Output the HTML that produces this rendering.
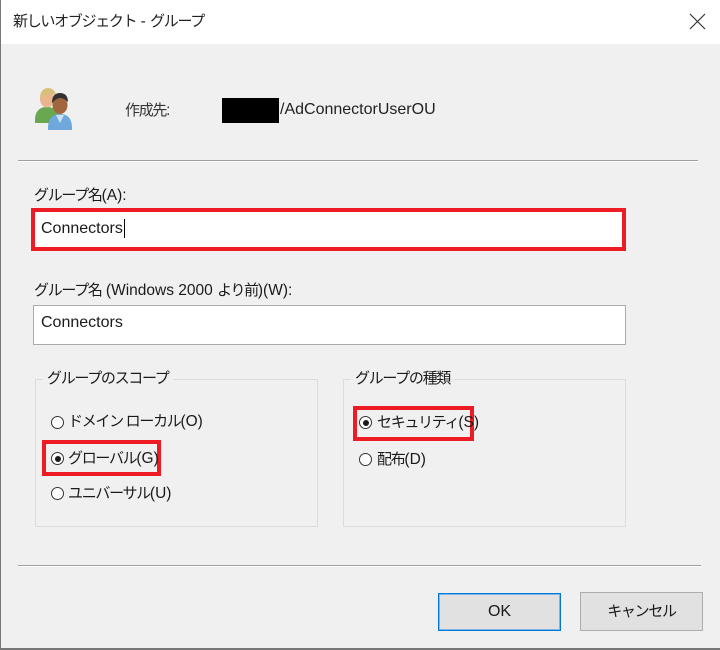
<!DOCTYPE html>
<html><head><meta charset="utf-8"><style>
*{margin:0;padding:0;box-sizing:border-box}
body{width:720px;height:650px;background:#f0f0f0;font-family:"Liberation Sans","Noto Sans CJK JP",sans-serif;color:#1a1a1a;position:relative;overflow:hidden;font-size:15px}
.a{position:absolute}
.t{white-space:nowrap;line-height:18px}
.j{letter-spacing:-1.3px}
.n{letter-spacing:0;font-size:15.5px}
.l{font-size:16px}
.radio{position:absolute;width:13px;height:13px;border:1px solid #333;border-radius:50%;background:#fff}
.radio.on::after{content:"";position:absolute;left:2.5px;top:2.5px;width:6px;height:6px;border-radius:50%;background:#1a1a1a}
.red{position:absolute;border:4px solid #ed1c24}
.sep{position:absolute;height:2px;border-top:1px solid #a0a0a0;border-bottom:1px solid #fff}
.gb{position:absolute;border:1px solid #dcdcdc}
</style></head><body>
<div class="a" style="left:0;top:0;width:720px;height:44px;background:#fff"></div>
<div class="a" style="left:0;top:0;width:1px;height:650px;background:#777"></div>
<div class="a" style="left:0;top:648px;width:720px;height:2px;background:#777"></div>
<div class="a t j" style="left:13px;top:13px;font-size:15px;color:#222">新しいオブジェクト<span class="n"> - </span>グループ</div>
<svg class="a" style="left:689px;top:13px" width="17" height="17" viewBox="0 0 17 17"><path d="M1 1L16 16M16 1L1 16" stroke="#333" stroke-width="1.2"/></svg>

<svg class="a" style="left:34px;top:86px" width="48" height="44" viewBox="0 0 48 44">
<path d="M1 34c0-9 5-13 12-13s12 4 12 13v3H1z" fill="#6aa84f"/>
<ellipse cx="13" cy="13" rx="7" ry="8.5" fill="#e8b58c"/>
<path d="M6 12c0-7 4-10 8-10s8 3 8 8c-3-2-6-3-8-1-2 1-5 2-8 3z" fill="#d9c07a"/>
<path d="M14 42c0-10 5-14 12-14s12 4 12 14v2H14z" fill="#6fa8dc"/>
<path d="M22 29l4 8 4-8z" fill="#cfe2f3"/>
<ellipse cx="26" cy="19" rx="7.5" ry="9" fill="#a0673f"/>
<path d="M18 17c0-7 3-10 8-10s8 3 8 9c-2-2-5-4-8-4s-6 3-8 5z" fill="#333"/>
</svg>
<div class="a t j" style="left:125px;top:102px;color:#333">作成先<span class="n">:</span></div>
<div class="a" style="left:222px;top:98px;width:57px;height:25px;background:#000"></div>
<div class="a t l" style="left:280px;top:101px;color:#222">/AdConnectorUserOU</div>

<div class="sep" style="left:18px;top:160px;width:680px"></div>

<div class="a t j" style="left:34px;top:187px">グループ名<span class="n">(A):</span></div>
<div class="a" style="left:31px;top:208px;width:595px;height:43px;background:#fff"></div>
<div class="red" style="left:31px;top:208px;width:595px;height:43px"></div>
<div class="a t l" style="left:41px;top:220px">Connectors</div>
<div class="a" style="left:124px;top:219px;width:1px;height:19px;background:#000"></div>

<div class="a t j" style="left:34px;top:282px">グループ名<span class="n"> (Windows 2000 </span>より前<span class="n">)(W):</span></div>
<div class="a" style="left:33px;top:305px;width:593px;height:40px;background:#fff;border:1px solid #ababab"></div>
<div class="a t l" style="left:41px;top:314px">Connectors</div>

<div class="gb" style="left:35px;top:379px;width:283px;height:148px"></div>
<div class="a t j" style="left:43px;top:370px;background:#f0f0f0;padding:0 4px">グループのスコープ</div>
<div class="radio" style="left:51px;top:416px"></div>
<div class="a t j" style="left:68px;top:413px">ドメイン ローカル<span class="n">(O)</span></div>
<div class="red" style="left:42px;top:440px;width:119px;height:36px"></div>
<div class="radio on" style="left:51px;top:452px"></div>
<div class="a t j" style="left:68px;top:450px">グローバル<span class="n">(G)</span></div>
<div class="radio" style="left:51px;top:487px"></div>
<div class="a t j" style="left:68px;top:485px">ユニバーサル<span class="n">(U)</span></div>

<div class="gb" style="left:343px;top:379px;width:283px;height:148px"></div>
<div class="a t j" style="left:351px;top:370px;background:#f0f0f0;padding:0 4px">グループの種類</div>
<div class="red" style="left:353px;top:406px;width:121px;height:35px"></div>
<div class="radio on" style="left:359px;top:416px"></div>
<div class="a t j" style="left:377px;top:414px">セキュリティ<span class="n">(S)</span></div>
<div class="radio" style="left:359px;top:453px"></div>
<div class="a t j" style="left:377px;top:451px">配布<span class="n">(D)</span></div>

<div class="sep" style="left:18px;top:565px;width:683px"></div>

<div class="a" style="left:438px;top:593px;width:123px;height:38px;background:#e1e1e1;border:1px solid #0078d7;outline:1px solid #7db4e8;outline-offset:-2px"></div>
<div class="a t l" style="left:438px;top:603px;width:123px;text-align:center">OK</div>
<div class="a" style="left:580px;top:592px;width:123px;height:39px;background:#e1e1e1;border:1px solid #adadad"></div>
<div class="a t j" style="left:580px;top:603px;width:123px;text-align:center">キャンセル</div>
</body></html>
